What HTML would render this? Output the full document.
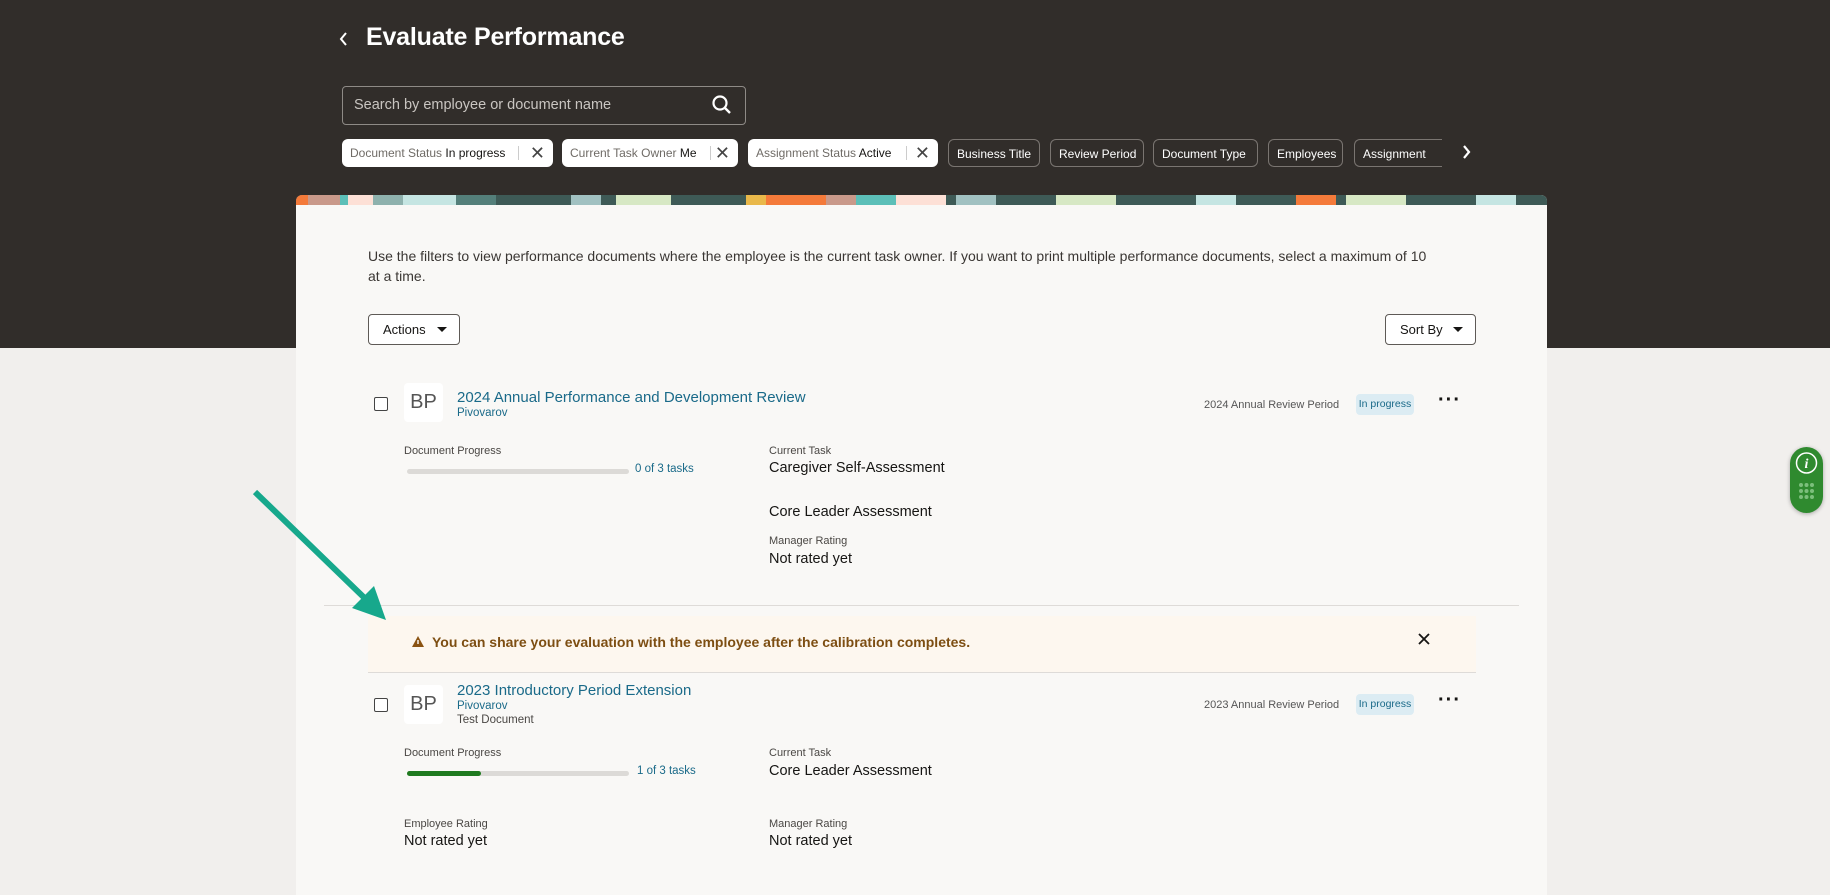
<!DOCTYPE html>
<html><head><meta charset="utf-8"><style>
*{box-sizing:border-box;margin:0;padding:0}
body{width:1830px;height:868px;overflow:hidden;background:#f1efed;font-family:"Liberation Sans",sans-serif;position:relative;color:#161513}
.hdr{position:absolute;left:0;top:0;width:1830px;height:348px;background:#312d2a}
.a{position:absolute;white-space:nowrap}
.chip{position:absolute;top:139px;height:28px;border-radius:6px;font-size:12px;line-height:28px;padding-left:8px}
.w{background:#fff;color:#6f6b66}
.w b{color:#161513;font-weight:normal}
.w .x{position:absolute;right:8px;top:0;font-size:18px;color:#444}
.w .sep{position:absolute;top:7px;width:1px;height:14px;background:#ccc}
.d{border:1px solid #7a7571;color:#fff}
.card{position:absolute;left:296px;top:195px;width:1251px;height:700px;background:#f9f8f6;border-radius:6px 6px 0 0;overflow:hidden}
.btn{position:absolute;height:31px;border:1px solid #5e5a56;border-radius:4px;background:#fff;font-size:13px;line-height:29px;padding-left:14px}
.btn:after{content:"";position:absolute;right:12px;top:12px;border-left:5px solid transparent;border-right:5px solid transparent;border-top:5px solid #161513}
.cb{position:absolute;width:14px;height:14px;border:1.5px solid #444;border-radius:2px;background:#fff}
.av{position:absolute;width:39px;height:39px;background:#fff;border-radius:4px;font-size:20px;color:#555;text-align:center;line-height:39px}
.ttl{color:#1a6a89;font-size:15px}
.sm{font-size:11.5px;color:#1a6a89}
.lbl{font-size:11px;color:#4a4744}
.val{font-size:14.5px;color:#161513}
.badge{position:absolute;width:58px;height:21px;background:#dcecf3;border-radius:4px;color:#1a6a89;font-size:10.5px;text-align:center;line-height:21px}
.dots{position:absolute;font-size:20px;font-weight:bold;letter-spacing:1px;color:#161513}
.bar{position:absolute;height:5px;width:222px;background:#dcdad7;border-radius:3px}
</style></head><body>
<div class="hdr"></div>
<svg class="a" style="left:337px;top:30px" width="14" height="18"><path d="M9 3 L4 9 L9 15" stroke="#fff" stroke-width="2" fill="none"/></svg>
<div class="a" style="left:366px;top:23px;font-size:25px;font-weight:bold;color:#fff;letter-spacing:-0.2px">Evaluate Performance</div>
<div class="a" style="left:342px;top:86px;width:404px;height:39px;border:1px solid #8e8a86;border-radius:4px"></div>
<div class="a" style="left:354px;top:97px;font-size:14.5px;color:#c9c5c1">Search by employee or document name</div>
<svg class="a" style="left:711px;top:94px" width="22" height="22"><circle cx="9" cy="9" r="6.5" stroke="#fff" stroke-width="2.2" fill="none"/><path d="M14 14 L19 19" stroke="#fff" stroke-width="2.4"/></svg>
<div class="chip w" style="left:342px;width:211px">Document Status <b>In progress</b><span class="sep" style="left:176px"></span><span class="x">✕</span></div>
<div class="chip w" style="left:562px;width:176px">Current Task Owner <b>Me</b><span class="sep" style="left:148px"></span><span class="x">✕</span></div>
<div class="chip w" style="left:748px;width:190px">Assignment Status <b>Active</b><span class="sep" style="left:158px"></span><span class="x">✕</span></div>
<div class="chip d" style="left:948px;width:92px">Business Title</div>
<div class="chip d" style="left:1050px;width:94px">Review Period</div>
<div class="chip d" style="left:1153px;width:105px">Document Type</div>
<div class="chip d" style="left:1268px;width:75px">Employees</div>
<div class="chip d" style="left:1354px;width:88px;overflow:hidden;border-right:none;border-radius:6px 0 0 6px">Assignment Type</div>
<svg class="a" style="left:1459px;top:143px" width="14" height="18"><path d="M5 3 L10 9 L5 15" stroke="#fff" stroke-width="2.2" fill="none"/></svg>

<div class="card">
<svg width="1251" height="10" style="position:absolute;left:0;top:0"><rect width="1251" height="10" fill="#3e5a56"/><rect x="0" width="12" height="10" fill="#f47a3a"/><rect x="12" width="32" height="10" fill="#c9998a"/><rect x="44" width="8" height="10" fill="#5cbfb8"/><rect x="52" width="25" height="10" fill="#fde0d6"/><rect x="77" width="30" height="10" fill="#8eb1ad"/><rect x="107" width="60" height="10" fill="#c5e5e2"/><rect x="160" width="40" height="10" fill="#547f7a"/><rect x="275" width="30" height="10" fill="#a1c1c1"/><rect x="320" width="55" height="10" fill="#d7e8c4"/><rect x="450" width="30" height="10" fill="#e9b84a"/><rect x="470" width="60" height="10" fill="#f47a3a"/><rect x="530" width="30" height="10" fill="#c9998a"/><rect x="560" width="40" height="10" fill="#5cbfb8"/><rect x="600" width="50" height="10" fill="#fde0d6"/><rect x="660" width="40" height="10" fill="#a1c1c1"/><rect x="760" width="60" height="10" fill="#d7e8c4"/><rect x="900" width="40" height="10" fill="#c5e5e2"/><rect x="1000" width="40" height="10" fill="#f47a3a"/><rect x="1050" width="60" height="10" fill="#d7e8c4"/><rect x="1180" width="40" height="10" fill="#c5e5e2"/></svg>
</div>
<div class="a" style="left:368px;top:246px;font-size:14px;line-height:20px;color:#3a3633;white-space:normal;width:1070px">Use the filters to view performance documents where the employee is the current task owner. If you want to print multiple performance documents, select a maximum of 10 at a time.</div>
<div class="btn" style="left:368px;top:314px;width:92px">Actions</div>
<div class="btn" style="left:1385px;top:314px;width:91px">Sort By</div>

<div class="cb" style="left:374px;top:397px"></div>
<div class="av" style="left:404px;top:383px">BP</div>
<div class="a ttl" style="left:457px;top:389px">2024 Annual Performance and Development Review</div>
<div class="a sm" style="left:457px;top:407px">Pivovarov</div>
<div class="a lbl" style="left:1204px;top:399px;color:#555">2024 Annual Review Period</div>
<div class="badge" style="left:1356px;top:394px">In progress</div>
<div class="dots" style="left:1438px;top:389px">···</div>
<div class="a lbl" style="left:404px;top:445px">Document Progress</div>
<div class="bar" style="left:407px;top:469px"></div>
<div class="a sm" style="left:635px;top:463px">0 of 3 tasks</div>
<div class="a lbl" style="left:769px;top:445px">Current Task</div>
<div class="a val" style="left:769px;top:460px">Caregiver Self-Assessment</div>
<div class="a val" style="left:769px;top:504px">Core Leader Assessment</div>
<div class="a lbl" style="left:769px;top:535px">Manager Rating</div>
<div class="a val" style="left:769px;top:551px">Not rated yet</div>

<div class="a" style="left:324px;top:605px;width:1195px;height:1px;background:#dedbd8"></div>
<div class="a" style="left:368px;top:616px;width:1108px;height:57px;background:#fdf7ef;border-bottom:1px solid #dedbd8"></div>
<svg class="a" style="left:411px;top:635px" width="14" height="13"><path d="M7 1 L13 12 L1 12 Z" fill="#8a5312"/><rect x="6.3" y="5" width="1.4" height="4" fill="#fff"/></svg>
<div class="a" style="left:432px;top:634px;font-size:14px;font-weight:bold;color:#7d4e12">You can share your evaluation with the employee after the calibration completes.</div>
<svg class="a" style="left:1417px;top:632px" width="14" height="14"><path d="M2 2 L12 12 M12 2 L2 12" stroke="#161513" stroke-width="1.8"/></svg>

<div class="cb" style="left:374px;top:698px"></div>
<div class="av" style="left:404px;top:685px">BP</div>
<div class="a ttl" style="left:457px;top:682px">2023 Introductory Period Extension</div>
<div class="a sm" style="left:457px;top:700px">Pivovarov</div>
<div class="a" style="left:457px;top:714px;font-size:11.5px;color:#4a4744">Test Document</div>
<div class="a lbl" style="left:1204px;top:699px;color:#555">2023 Annual Review Period</div>
<div class="badge" style="left:1356px;top:694px">In progress</div>
<div class="dots" style="left:1438px;top:689px">···</div>
<div class="a lbl" style="left:404px;top:747px">Document Progress</div>
<div class="bar" style="left:407px;top:771px"></div>
<div class="bar" style="left:407px;top:771px;width:74px;background:#1f7a1f"></div>
<div class="a sm" style="left:637px;top:765px">1 of 3 tasks</div>
<div class="a lbl" style="left:769px;top:747px">Current Task</div>
<div class="a val" style="left:769px;top:763px">Core Leader Assessment</div>
<div class="a lbl" style="left:404px;top:818px">Employee Rating</div>
<div class="a val" style="left:404px;top:833px">Not rated yet</div>
<div class="a lbl" style="left:769px;top:818px">Manager Rating</div>
<div class="a val" style="left:769px;top:833px">Not rated yet</div>

<svg class="a" style="left:240px;top:480px" width="160" height="150"><path d="M15 12 L138 131" stroke="#17a88c" stroke-width="6"/><path d="M146 140 L112 128 L134 106 Z" fill="#17a88c"/></svg>

<div class="a" style="left:1790px;top:447px;width:33px;height:66px;background:#2f8a2f;border-radius:17px;box-shadow:0 1px 4px rgba(0,0,0,.3)"></div>
<svg class="a" style="left:1790px;top:447px" width="33" height="66"><circle cx="16.5" cy="16" r="10" stroke="#fff" stroke-width="1.5" fill="none"/><text x="16.5" y="21" font-family="Liberation Serif" font-style="italic" font-weight="bold" font-size="14" fill="#fff" text-anchor="middle">i</text><g fill="#7cbf7c"><circle cx="11" cy="38" r="2"/><circle cx="16.5" cy="38" r="2"/><circle cx="22" cy="38" r="2"/><circle cx="11" cy="44" r="2"/><circle cx="16.5" cy="44" r="2"/><circle cx="22" cy="44" r="2"/><circle cx="11" cy="50" r="2"/><circle cx="16.5" cy="50" r="2"/><circle cx="22" cy="50" r="2"/></g></svg>
</body></html>
